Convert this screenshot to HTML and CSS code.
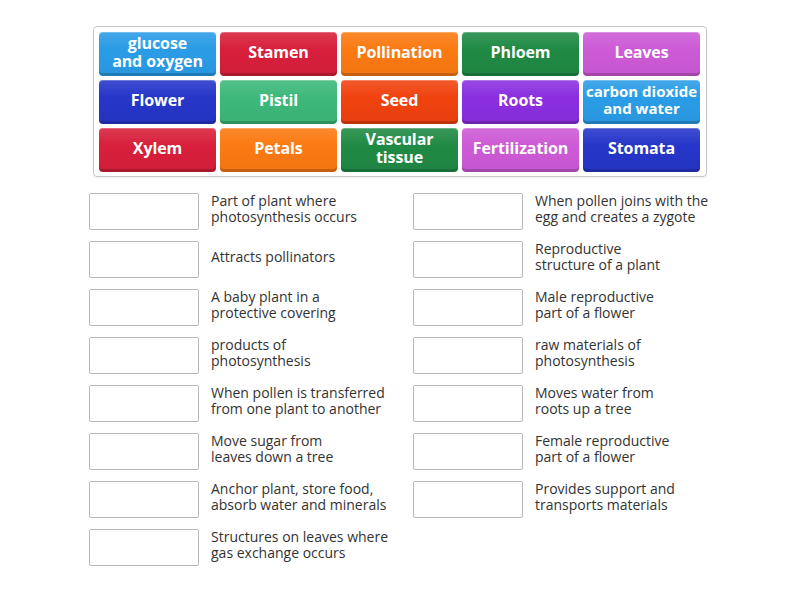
FILE: index.html
```html
<!DOCTYPE html>
<html>
<head>
<meta charset="utf-8">
<link rel="stylesheet" href="styles.css">
</head>
<body>
<div class="page">
  <div class="bank">
    <div class="tile sky">glucose<br>and oxygen</div>
    <div class="tile red">Stamen</div>
    <div class="tile orange">Pollination</div>
    <div class="tile dgreen">Phloem</div>
    <div class="tile pink">Leaves</div>
    <div class="tile blue">Flower</div>
    <div class="tile mgreen">Pistil</div>
    <div class="tile rorange">Seed</div>
    <div class="tile purple">Roots</div>
    <div class="tile sky small">carbon dioxide<br>and water</div>
    <div class="tile red">Xylem</div>
    <div class="tile orange">Petals</div>
    <div class="tile dgreen">Vascular<br>tissue</div>
    <div class="tile pink">Fertilization</div>
    <div class="tile blue">Stomata</div>
  </div>
  <div class="targets">
    <div class="col">
      <div class="row"><div class="box"></div><div class="desc">Part of plant where<br>photosynthesis occurs</div></div>
      <div class="row"><div class="box"></div><div class="desc">Attracts pollinators</div></div>
      <div class="row"><div class="box"></div><div class="desc">A baby plant in a<br>protective covering</div></div>
      <div class="row"><div class="box"></div><div class="desc">products of<br>photosynthesis</div></div>
      <div class="row"><div class="box"></div><div class="desc">When pollen is transferred<br>from one plant to another</div></div>
      <div class="row"><div class="box"></div><div class="desc">Move sugar from<br>leaves down a tree</div></div>
      <div class="row"><div class="box"></div><div class="desc">Anchor plant, store food,<br>absorb water and minerals</div></div>
      <div class="row"><div class="box"></div><div class="desc">Structures on leaves where<br>gas exchange occurs</div></div>
    </div>
    <div class="col">
      <div class="row"><div class="box"></div><div class="desc">When pollen joins with the<br>egg and creates a zygote</div></div>
      <div class="row"><div class="box"></div><div class="desc">Reproductive<br>structure of a plant</div></div>
      <div class="row"><div class="box"></div><div class="desc">Male reproductive<br>part of a flower</div></div>
      <div class="row"><div class="box"></div><div class="desc">raw materials of<br>photosynthesis</div></div>
      <div class="row"><div class="box"></div><div class="desc">Moves water from<br>roots up a tree</div></div>
      <div class="row"><div class="box"></div><div class="desc">Female reproductive<br>part of a flower</div></div>
      <div class="row"><div class="box"></div><div class="desc">Provides support and<br>transports materials</div></div>
    </div>
  </div>
</div>
</body>
</html>
```
FILE: styles.css
```css
html, body {
  margin: 0;
  padding: 0;
  background: #fff;
}
.page {
  width: 800px;
  height: 600px;
  font-family: "Open Sans", "Liberation Sans", sans-serif;
  padding-top: 26px;
  box-sizing: border-box;
}
.bank {
  width: 614px;
  box-sizing: border-box;
  margin: 0 0 0 93px;
  border: 1px solid #c8c8c8;
  border-radius: 4px;
  padding: 5px 5px 4px 5px;
  display: grid;
  grid-template-columns: repeat(5, 117px);
  grid-auto-rows: 44px;
  column-gap: 4px;
  row-gap: 4px;
  box-shadow: 0 1px 2px rgba(0,0,0,0.08);
}
.tile {
  border-radius: 4px;
  color: #fff;
  font-weight: 700;
  font-size: 16px;
  line-height: 18px;
  white-space: nowrap;
  letter-spacing: -0.1px;
  display: flex;
  align-items: center;
  justify-content: center;
  text-align: center;
  padding-bottom: 4px;
  box-sizing: border-box;
  background-image: linear-gradient(to bottom, rgba(255,255,255,0.12), rgba(255,255,255,0) 40%, rgba(0,0,0,0.04));
  box-shadow: inset 0 -3px 0 rgba(0,0,0,0.18), inset 0 1px 0 rgba(255,255,255,0.25);
}
.tile.small {
  font-size: 15px;
  line-height: 17px;
  letter-spacing: 0;
}
.sky { background-color: #2a9ce6; }
.red { background-color: #d81f3b; }
.orange { background-color: #fb7a12; }
.dgreen { background-color: #1f8a44; }
.pink { background-color: #cd5ad6; }
.blue { background-color: #2536c9; }
.mgreen { background-color: #3db87a; }
.rorange { background-color: #f0420f; }
.purple { background-color: #8a2fe0; }

.targets {
  margin-top: 16px;
  padding-left: 89px;
  display: grid;
  grid-template-columns: 324px 324px;
}
.col {
  display: flex;
  flex-direction: column;
  gap: 11px;
}
.row {
  display: flex;
  align-items: center;
  gap: 12px;
  height: 37px;
}
.box {
  width: 110px;
  height: 37px;
  box-sizing: border-box;
  border: 1px solid #b9b9b9;
  border-radius: 2px;
  background: #fff;
  flex: none;
}
.desc {
  font-size: 14px;
  line-height: 16px;
  color: #333;
  margin-top: -6px;
}
```
